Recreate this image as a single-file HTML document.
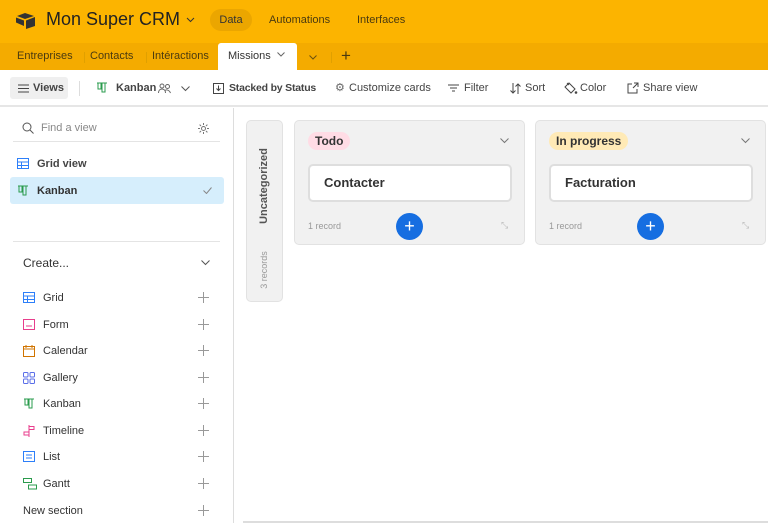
<!DOCTYPE html>
<html><head><meta charset="utf-8"><style>
*{box-sizing:border-box;margin:0;padding:0}
body{width:768px;height:523px;overflow:hidden;font-family:"Liberation Sans",sans-serif;color:#333;background:#fff;position:relative;font-size:11px}
.abs{position:absolute}
.top{left:0;top:0;width:768px;height:43px;background:#fcb400}
.tabs{left:0;top:43px;width:768px;height:27px;background:#f4ab00}
.tb{position:absolute;top:0;height:27px;line-height:27px;font-size:11px;color:#4a3a10}
.sep{position:absolute;top:9px;width:1px;height:11px;background:#e0a000}
.toolbar{left:0;top:70px;width:768px;height:37px;background:#fff;border-bottom:2px solid #e6e6e6}
.ti{position:absolute;top:0;height:37px;line-height:37px;font-size:11px;color:#444;white-space:nowrap}
.side{left:0;top:108px;width:234px;height:415px;border-right:1px solid #ddd;background:#fff}
.item{position:absolute;left:23px;font-size:11px;color:#333;height:16px;line-height:16px}
.item svg{position:absolute;left:0;top:2px}
.item span{position:absolute;left:20px;white-space:nowrap}
.plus{position:absolute;left:198px;width:11px;height:11px}
.plus:before,.plus:after{content:"";position:absolute;background:#999}
.plus:before{left:5px;top:0;width:1px;height:11px}
.plus:after{left:0;top:5px;width:11px;height:1px}
.col{position:absolute;top:120px;width:231px;height:125px;background:#f1f1f1;border:1px solid #e2e2e2;border-radius:5px}
.card{position:absolute;left:13px;top:43px;width:204px;height:38px;background:#fff;border:2px solid #dedede;border-radius:5px;font-size:13px;font-weight:bold;color:#333;line-height:34px;padding-left:14px}
.pill{position:absolute;left:13px;top:11px;height:18px;line-height:18px;padding:0 7px;border-radius:9px;font-size:12px;font-weight:bold;color:#333}
.fab{position:absolute;left:101px;top:92px;width:27px;height:27px;border-radius:50%;background:#166ee1;color:#fff;text-align:center;line-height:26px;font-size:18px}
.rec{position:absolute;left:13px;top:100px;font-size:9px;color:#999}
</style></head><body>
<div class="abs top">
 <svg class="abs" style="left:16px;top:12px" width="20" height="17" viewBox="0 0 20 17"><path d="M9 1 L1 4 L9 7 L18 4 Z" fill="#333"/><path d="M10 8.5 L19 5 V14 L10 17Z" fill="#333"/><path d="M0 5.5 L8 8.5 V14 L0 10.5Z" fill="#333"/></svg>
 <div class="abs" style="left:46px;top:9px;font-size:18px;color:#222">Mon Super CRM</div>
 <svg class="abs" style="left:186px;top:17px" width="9" height="6"><path d="M1 1l3.5 3.5L8 1" stroke="#333" fill="none"/></svg>
 <div class="abs" style="left:210px;top:9px;width:42px;height:22px;border-radius:11px;background:#eba600;font-size:11px;line-height:22px;text-align:center;color:#333">Data</div>
 <div class="abs" style="left:269px;top:14px;font-size:11px;color:#4a3a10">Automations</div>
 <div class="abs" style="left:357px;top:14px;font-size:11px;color:#4a3a10">Interfaces</div>
</div>
<div class="abs tabs">
 <div class="tb" style="left:17px">Entreprises</div><div class="sep" style="left:84px"></div>
 <div class="tb" style="left:90px">Contacts</div><div class="sep" style="left:146px"></div>
 <div class="tb" style="left:152px">Intéractions</div>
 <div class="tb" style="left:218px;width:79px;background:#fff;border-radius:3px 3px 0 0;padding-left:10px;color:#333">Missions <svg width="8" height="5" style="margin-left:3px;vertical-align:2px"><path d="M.5.5l3.5 3.5L7.5.5" stroke="#666" fill="none"/></svg></div>
 <svg class="abs" style="left:309px;top:12px" width="8" height="5"><path d="M.5.5l3.5 3.5L7.5.5" stroke="#6a5010" fill="none"/></svg>
 <div class="sep" style="left:331px"></div>
 <div class="abs" style="left:341px;top:3px;font-size:17px;color:#4a3a10">+</div>
</div>
<div class="abs toolbar">
 <div class="abs" style="left:10px;top:7px;width:58px;height:22px;background:#efefef;border-radius:3px"></div>
 <svg class="abs" style="left:18px;top:14px" width="11" height="9"><path d="M0 1h11M0 4.5h11M0 8h11" stroke="#444"/></svg>
 <div class="ti" style="left:33px;font-weight:bold">Views</div>
 <div class="abs" style="left:79px;top:11px;width:1px;height:15px;background:#ddd"></div>
 <svg class="abs" style="left:96px;top:12px" width="12" height="12"><path d="M1 1h10M2 1v6h3V1M6 1v9h3V1" stroke="#2a9b4c" fill="none"/></svg>
 <div class="ti" style="left:116px;font-weight:bold">Kanban</div>
 <svg class="abs" style="left:158px;top:13px" width="13" height="11"><circle cx="4" cy="3" r="2" fill="none" stroke="#666"/><circle cx="9.5" cy="3.5" r="2" fill="none" stroke="#666"/><path d="M.5 10c0-3 2-4 3.5-4s3.5 1 3.5 4M7 7.5c1-1 4-1 5.5 2.5" fill="none" stroke="#666"/></svg>
 <svg class="abs" style="left:181px;top:16px" width="9" height="6"><path d="M.5.5l4 4 4-4" stroke="#555" fill="none"/></svg>
 <svg class="abs" style="left:213px;top:13px" width="11" height="11"><rect x=".5" y=".5" width="10" height="10" fill="none" stroke="#444"/><path d="M5.5 2.5v5M3.5 5.5l2 2 2-2" stroke="#444" fill="none"/></svg>
 <div class="ti" style="left:229px;font-weight:bold;font-size:10.5px;letter-spacing:-.2px">Stacked by Status</div>
 <div class="ti" style="left:335px;color:#666">⚙</div>
 <div class="ti" style="left:349px">Customize cards</div>
 <svg class="abs" style="left:448px;top:14px" width="11" height="8"><path d="M0 1h11M2 4h7M4 7h3" stroke="#444"/></svg>
 <div class="ti" style="left:464px">Filter</div>
 <svg class="abs" style="left:510px;top:13px" width="11" height="11"><path d="M3 0v10M.5 7.5L3 10l2.5-2.5M8 11V1M5.5 3.5L8 1l2.5 2.5" stroke="#444" fill="none"/></svg>
 <div class="ti" style="left:525px">Sort</div>
 <svg class="abs" style="left:564px;top:12px" width="14" height="13"><path d="M5 1l6 6-4 4-6-6z" fill="none" stroke="#444"/><path d="M3 1l2 2" stroke="#444"/><circle cx="12" cy="10.5" r="1.3" fill="#444"/></svg>
 <div class="ti" style="left:580px">Color</div>
 <svg class="abs" style="left:627px;top:12px" width="12" height="12"><path d="M5 2H1v9h9V7M7 1h4v4M11 1L6 6" stroke="#444" fill="none"/></svg>
 <div class="ti" style="left:643px">Share view</div>
</div>
<div class="abs side">
 <svg class="abs" style="left:22px;top:14px" width="12" height="12"><circle cx="5" cy="5" r="4" stroke="#555" fill="none"/><path d="M8 8l3.5 3.5" stroke="#555"/></svg>
 <div class="abs" style="left:41px;top:14px;font-size:11px;color:#888">Find a view</div>
 <svg class="abs" style="left:197px;top:14px" width="13" height="13" viewBox="0 0 13 13"><circle cx="6.5" cy="6.5" r="2" fill="none" stroke="#777"/><path d="M6.5 1v2M6.5 10v2M1 6.5h2M10 6.5h2M2.6 2.6l1.4 1.4M9 9l1.4 1.4M2.6 10.4L4 9M9 4l1.4-1.4" stroke="#777"/></svg>
 <div class="abs" style="left:13px;top:33px;width:207px;height:1px;background:#e4e4e4"></div>
 <div class="item" style="top:48px;left:17px"><svg width="12" height="11"><rect x=".5" y=".5" width="11" height="10" fill="none" stroke="#2d7ff9"/><path d="M.5 4h11M.5 7.5h11M4.5 4v7" stroke="#2d7ff9"/></svg><span style="font-weight:bold;color:#444">Grid view</span></div>
 <div class="abs" style="left:10px;top:69px;width:214px;height:27px;background:#d6eefc;border-radius:3px"></div>
 <div class="item" style="top:75px;left:17px"><svg width="12" height="11"><path d="M1 1h10M2 1v6h3V1M6 1v9h3V1" stroke="#2a9b4c" fill="none"/></svg><span style="font-weight:bold">Kanban</span></div>
 <svg class="abs" style="left:203px;top:79px" width="9" height="7"><path d="M.5 3.5l3 3 5-6" stroke="#888" fill="none"/></svg>
 <div class="abs" style="left:13px;top:133px;width:207px;height:1px;background:#e4e4e4"></div>
 <div class="abs" style="left:23px;top:148px;font-size:12px;color:#333">Create...</div>
 <svg class="abs" style="left:201px;top:152px" width="9" height="6"><path d="M.5.5l4 4 4-4" stroke="#555" fill="none"/></svg>
 <div class="item" style="top:182px"><svg width="12" height="11"><rect x=".5" y=".5" width="11" height="10" fill="none" stroke="#2d7ff9"/><path d="M.5 4h11M.5 7.5h11M4.5 4v7" stroke="#2d7ff9"/></svg><span>Grid</span></div><div class="plus" style="top:184px"></div>
 <div class="item" style="top:209px"><svg width="12" height="11"><rect x=".5" y=".5" width="11" height="10" fill="none" stroke="#e83e8c"/><path d="M3 7h6" stroke="#e83e8c"/></svg><span>Form</span></div><div class="plus" style="top:211px"></div>
 <div class="item" style="top:235px"><svg width="12" height="12"><rect x=".5" y="1.5" width="11" height="10" fill="none" stroke="#d07400"/><path d="M.5 4h11M3 0v3M9 0v3" stroke="#d07400"/></svg><span>Calendar</span></div><div class="plus" style="top:237px"></div>
 <div class="item" style="top:262px"><svg width="12" height="12"><rect x=".5" y=".5" width="4.5" height="4.5" rx="1" fill="none" stroke="#5a6ee8"/><rect x="7" y=".5" width="4.5" height="4.5" rx="1" fill="none" stroke="#5a6ee8"/><rect x=".5" y="7" width="4.5" height="4.5" rx="1" fill="none" stroke="#5a6ee8"/><rect x="7" y="7" width="4.5" height="4.5" rx="1" fill="none" stroke="#5a6ee8"/></svg><span>Gallery</span></div><div class="plus" style="top:264px"></div>
 <div class="item" style="top:288px"><svg width="12" height="11"><path d="M1 1h10M2 1v6h3V1M6 1v9h3V1" stroke="#2a9b4c" fill="none"/></svg><span>Kanban</span></div><div class="plus" style="top:290px"></div>
 <div class="item" style="top:315px"><svg width="12" height="12"><path d="M6 0v12M6 1.5h5v3H6M6 7H1v3h5" stroke="#e83e8c" fill="none"/></svg><span>Timeline</span></div><div class="plus" style="top:317px"></div>
 <div class="item" style="top:341px"><svg width="12" height="11"><rect x=".5" y=".5" width="11" height="10" fill="none" stroke="#2d7ff9"/><path d="M3 4h6M3 7h6" stroke="#2d7ff9"/></svg><span>List</span></div><div class="plus" style="top:343px"></div>
 <div class="item" style="top:368px"><svg width="14" height="12"><rect x=".5" y=".5" width="8" height="4" fill="none" stroke="#2a9b4c"/><rect x="5.5" y="7" width="8" height="4" fill="none" stroke="#2a9b4c"/></svg><span>Gantt</span></div><div class="plus" style="top:370px"></div>
 <div class="item" style="top:395px;left:23px"><span style="left:0">New section</span></div><div class="plus" style="top:397px"></div>
</div>
<div class="abs" style="left:246px;top:120px;width:37px;height:182px;background:#f1f1f1;border:1px solid #e2e2e2;border-radius:5px"></div>
<div class="abs" style="left:264px;top:186px;transform:translate(-50%,-50%) rotate(-90deg);font-size:11px;font-weight:bold;color:#555;white-space:nowrap">Uncategorized</div>
<div class="abs" style="left:264px;top:270px;transform:translate(-50%,-50%) rotate(-90deg);font-size:9px;color:#999;white-space:nowrap">3 records</div>
<div class="col" style="left:294px">
 <div class="pill" style="background:#ffdce5">Todo</div>
 <svg class="abs" style="left:205px;top:17px" width="9" height="6"><path d="M.5.5l4 4 4-4" stroke="#777" fill="none"/></svg>
 <div class="card">Contacter</div>
 <div class="rec">1 record</div><div class="fab">+</div>
 <div class="abs" style="left:206px;top:99px;font-size:9px;color:#bbb">⤡</div>
</div>
<div class="col" style="left:535px">
 <div class="pill" style="background:#ffeab6">In progress</div>
 <svg class="abs" style="left:205px;top:17px" width="9" height="6"><path d="M.5.5l4 4 4-4" stroke="#777" fill="none"/></svg>
 <div class="card">Facturation</div>
 <div class="rec">1 record</div><div class="fab">+</div>
 <div class="abs" style="left:206px;top:99px;font-size:9px;color:#bbb">⤡</div>
</div>
<div class="abs" style="left:243px;top:521px;width:525px;height:2px;background:#ddd"></div>
</body></html>
